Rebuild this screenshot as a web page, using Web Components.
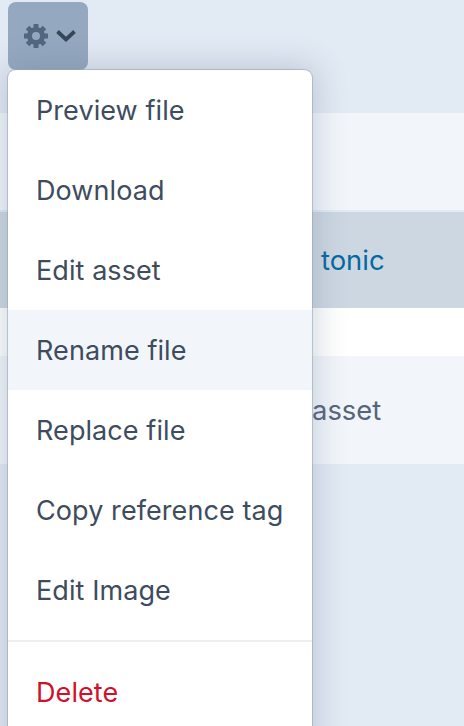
<!DOCTYPE html>
<html>
<head>
<meta charset="utf-8">
<style>
  html, body { margin: 0; height: 100%; overflow: hidden; }
  body { background: #e2eaf4; font-family: Inter, "Liberation Sans", sans-serif; }
</style>
</head>
<body>
<asset-page>
  <asset-row slot="rows" tone="light" height="97"></asset-row>
  <asset-row slot="rows" tone="active" height="96" style="margin-top:2px"><a style="color:#0369a1">tonic</a></asset-row>
  <asset-row slot="rows" tone="white" height="48"></asset-row>
  <asset-row slot="rows" tone="light" height="108" inset="312">asset</asset-row>
  <gear-button slot="menu"></gear-button>
  <action-menu slot="menu">
    <menu-item>Preview file</menu-item>
    <menu-item>Download</menu-item>
    <menu-item>Edit asset</menu-item>
    <menu-item hover>Rename file</menu-item>
    <menu-item>Replace file</menu-item>
    <menu-item>Copy reference tag</menu-item>
    <menu-item>Edit Image</menu-item>
    <menu-item divider danger>Delete</menu-item>
  </action-menu>
</asset-page>

<script>
class AssetPage extends HTMLElement {
  constructor() {
    super();
    this.attachShadow({ mode: 'open' });
    this.shadowRoot.innerHTML = `
      <style>
        :host { display: block; position: relative; height: 726px; overflow: hidden; }
        .rows { display: flex; flex-direction: column; padding-top: 113px; }
        .overlay { position: absolute; left: 8px; top: 2px; width: 304px; }
      </style>
      <div class="rows"><slot name="rows"></slot></div>
      <div class="overlay"><slot name="menu"></slot></div>
    `;
  }
}

class AssetRow extends HTMLElement {
  constructor() {
    super();
    this.attachShadow({ mode: 'open' });
    const tones = { light: '#f2f6fb', active: '#cdd7e2', white: '#ffffff' };
    const bg = tones[this.getAttribute('tone')] || '#fff';
    const h = this.getAttribute('height') || 96;
    const inset = this.getAttribute('inset') || 321;
    this.shadowRoot.innerHTML = `
      <style>
        :host { display: flex; align-items: center; height: ${h}px; background: ${bg}; box-sizing: border-box; padding-left: ${inset}px; font-size: 27.4px; color: #56657a; }
      </style>
      <slot></slot>
    `;
  }
}

class GearButton extends HTMLElement {
  constructor() {
    super();
    this.attachShadow({ mode: 'open' });
    // eight teeth round a ring, the hole stays see-through
    const teeth = [0, 45, 90, 135, 180, 225, 270, 315]
      .map(a => `<rect x="9.5" y="0" width="5" height="5" transform="rotate(${a} 12 12)"/>`).join('');
    this.shadowRoot.innerHTML = `
      <style>
        :host { display: flex; align-items: center; gap: 8px; padding-left: 16px; width: 80px; height: 68px; background: #94a8c0; border-radius: 8px; box-sizing: border-box; }
        svg { display: block; }
      </style>
      <svg width="24" height="24" viewBox="0 0 24 24" fill="#52667f">${teeth}<circle cx="12" cy="12" r="6.5" fill="none" stroke="#52667f" stroke-width="5"/></svg>
      <svg width="20" height="14" viewBox="0 0 20 14" fill="none" stroke="#36465a" stroke-width="3.8"><path d="M1.5 2.5L10 10.5L18.5 2.5"/></svg>
    `;
  }
}

class ActionMenu extends HTMLElement {
  constructor() {
    super();
    this.attachShadow({ mode: 'open' });
    this.shadowRoot.innerHTML = `
      <style>
        :host { display: block; background: #fff; border-radius: 8px 8px 0 0; height: 700px; overflow: hidden; box-shadow: 0 0 0 1px rgba(148,163,184,.55), 0 0 30px 4px rgba(100,116,139,.3); }
      </style>
      <slot></slot>
    `;
  }
}

class MenuItem extends HTMLElement {
  constructor() {
    super();
    this.attachShadow({ mode: 'open' });
    const color = this.hasAttribute('danger') ? '#d0112b' : '#3e4c5e';
    const bg = this.hasAttribute('hover') ? '#f2f6fb' : 'transparent';
    const divider = this.hasAttribute('divider') ? 'margin-top: 10px; border-top: 2px solid #eceef0; height: 102px;' : 'height: 80px;';
    this.shadowRoot.innerHTML = `
      <style>
        :host { display: flex; align-items: center; box-sizing: border-box; padding-left: 28px; font-size: 27px; letter-spacing: .08px; background: ${bg}; color: ${color}; ${divider} }
      </style>
      <slot></slot>
    `;
  }
}

customElements.define('asset-page', AssetPage);
customElements.define('asset-row', AssetRow);
customElements.define('gear-button', GearButton);
customElements.define('action-menu', ActionMenu);
customElements.define('menu-item', MenuItem);
</script>
</body>
</html>
